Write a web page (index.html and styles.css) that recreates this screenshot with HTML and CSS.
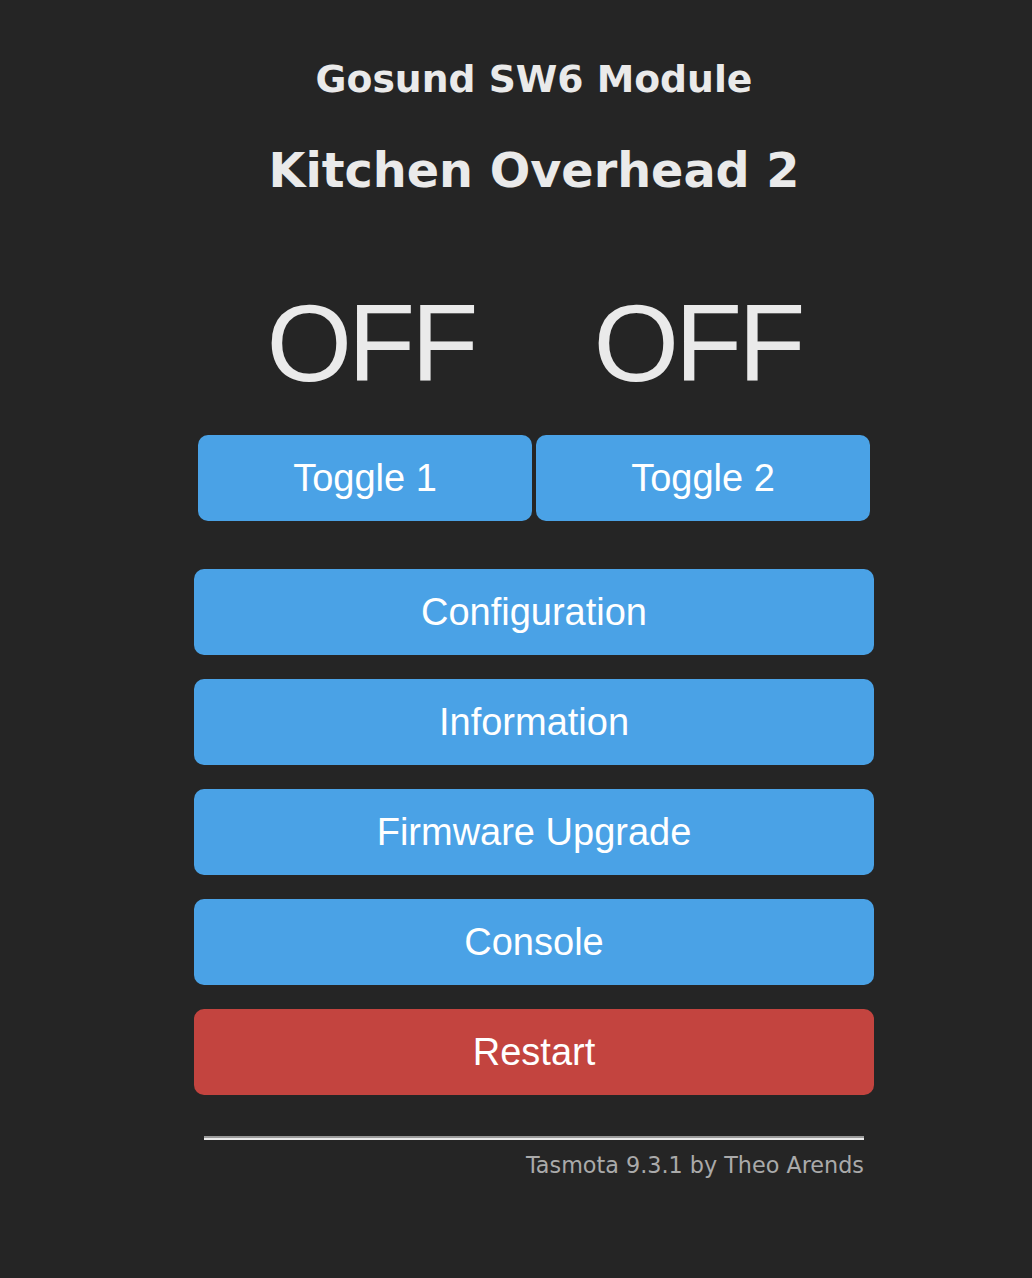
FILE: index.html
```html
<!DOCTYPE html>
<html lang="en">
<head>
    <meta charset="UTF-8">
    <meta name="viewport" content="width=device-width, initial-scale=1.0">
    <title>Kitchen Overhead 2 - Main Menu</title>
    <link rel="stylesheet" href="styles.css">
</head>
<body>
    <div class="main">
        <h3>Gosund SW6 Module</h3>
        <h2>Kitchen Overhead 2</h2>

        <div class="states">
            <div class="state">OFF</div>
            <div class="state">OFF</div>
        </div>

        <div class="toggles">
            <button>Toggle 1</button>
            <button>Toggle 2</button>
        </div>

        <div class="menu">
            <button>Configuration</button>
            <button>Information</button>
            <button>Firmware Upgrade</button>
            <button>Console</button>
            <button class="danger">Restart</button>
        </div>

        <hr>
        <div class="footer">Tasmota 9.3.1 by Theo Arends</div>
    </div>
</body>
</html>
```

FILE: styles.css
```css
body {
    margin: 0;
    padding: 0 0 0 36px;
    background-color: #252525;
    color: #eaeaea;
    font-family: "DejaVu Sans", Verdana, sans-serif;
}
.main {
    width: 680px;
    margin: 0 auto;
}
h3 {
    margin: 58px 0 0;
    font-size: 37.7px;
    line-height: 43px;
    text-align: center;
}
h2 {
    margin: 42px 0 0;
    font-size: 47.7px;
    line-height: 56px;
    text-align: center;
}
.states {
    display: grid;
    grid-template-columns: 1fr 1fr;
    padding: 0 13px;
    margin-top: 89px;
}
.state {
    font-family: "Liberation Sans", Arial, sans-serif;
    font-size: 110px;
    line-height: 110px;
    letter-spacing: -4px;
    text-align: center;
}
button {
    display: block;
    width: 100%;
    height: 86px;
    padding: 0;
    border: none;
    border-radius: 10px;
    background-color: #4aa2e6;
    color: #fff;
    font-family: "Liberation Sans", Arial, sans-serif;
    font-size: 38px;
    line-height: 86px;
    cursor: pointer;
}
.toggles {
    display: flex;
    gap: 4px;
    padding: 0 4px;
    margin-top: 37px;
}
.menu {
    display: flex;
    flex-direction: column;
    gap: 24px;
    margin-top: 48px;
}
button.danger {
    background-color: #c3443f;
}
hr {
    margin: 41px 10px 0;
    border: none;
    border-top: 2px solid #9a9a9a;
    border-bottom: 2px solid #eaeaea;
}
.footer {
    margin-top: 12px;
    padding-right: 10px;
    text-align: right;
    font-size: 22.3px;
    line-height: 26px;
    color: #aaa;
}
```
